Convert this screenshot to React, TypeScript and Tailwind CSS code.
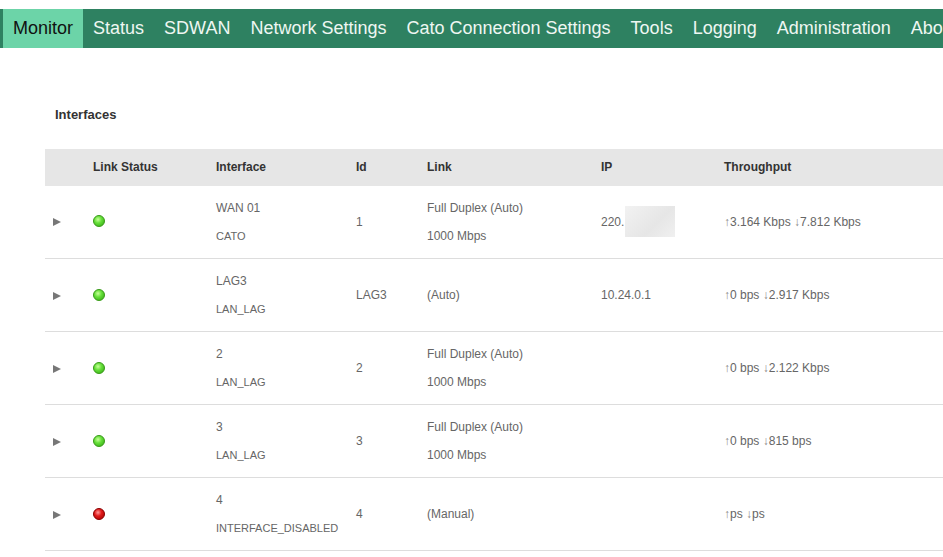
const navItems = [
  'Monitor',
  'Status',
  'SDWAN',
  'Network Settings',
  'Cato Connection Settings',
  'Tools',
  'Logging',
  'Administration',
  'About',
]

type Row = {
  up: boolean
  name: string
  group: string
  id: string
  link: string[]
  ip?: string
  blur?: boolean
  tx: string
  rx: string
}

const rows: Row[] = [
  { up: true, name: 'WAN 01', group: 'CATO', id: '1', link: ['Full Duplex (Auto)', '1000 Mbps'], ip: '220.', blur: true, tx: '3.164 Kbps', rx: '7.812 Kbps' },
  { up: true, name: 'LAG3', group: 'LAN_LAG', id: 'LAG3', link: ['(Auto)'], ip: '10.24.0.1', tx: '0 bps', rx: '2.917 Kbps' },
  { up: true, name: '2', group: 'LAN_LAG', id: '2', link: ['Full Duplex (Auto)', '1000 Mbps'], tx: '0 bps', rx: '2.122 Kbps' },
  { up: true, name: '3', group: 'LAN_LAG', id: '3', link: ['Full Duplex (Auto)', '1000 Mbps'], tx: '0 bps', rx: '815 bps' },
  { up: false, name: '4', group: 'INTERFACE_DISABLED', id: '4', link: ['(Manual)'], tx: 'ps', rx: 'ps' },
]

function Led({ up }: { up: boolean }) {
  return up ? (
    <span className="inline-block h-[12px] w-[12px] rounded-full border border-[#3a9a1a] bg-[radial-gradient(circle_at_40%_35%,#c8ff9a_0%,#66e03a_40%,#2fa40e_100%)]" />
  ) : (
    <span className="inline-block h-[12px] w-[12px] rounded-full border border-[#8a0000] bg-[radial-gradient(circle_at_40%_35%,#ff9a9a_0%,#e01a1a_40%,#a00000_100%)]" />
  )
}

export default function App() {
  return (
    <div className="h-[557px] w-[943px] overflow-hidden bg-white font-['Liberation_Sans',Arial,sans-serif]">
      <nav className="mt-[9px] flex h-[39px] items-stretch overflow-hidden whitespace-nowrap bg-[#2e8161] pl-[3px] text-[18px]">
        {navItems.map((item, i) => (
          <a
            key={item}
            className={
              i === 0
                ? 'flex shrink-0 items-center bg-[#6cd4a8] px-[10px] text-[#111]'
                : 'flex shrink-0 items-center px-[10px] text-[#eef7f2]'
            }
          >
            {item}
          </a>
        ))}
      </nav>

      <h2 className="ml-[55px] mt-[57px] text-[13px] font-bold text-[#333]">Interfaces</h2>

      <table className="ml-[45px] mt-[24px] w-[1000px] table-fixed border-collapse text-[12px]">
        <thead>
          <tr className="h-[37px] bg-[#e6e6e6] text-left font-bold text-[#333]">
            <th className="w-[48px]" />
            <th className="w-[123px] font-bold">Link Status</th>
            <th className="w-[140px] font-bold">Interface</th>
            <th className="w-[71px] font-bold">Id</th>
            <th className="w-[174px] font-bold">Link</th>
            <th className="w-[123px] font-bold">IP</th>
            <th className="font-bold">Throughput</th>
          </tr>
        </thead>
        <tbody className="text-[#666]">
          {rows.map((r) => (
            <tr key={r.name} className="h-[73px] border-b border-[#dddddd]">
              <td className="pl-[8px] pt-[1px]">
                <span className="inline-block h-0 w-0 border-y-[4px] border-l-[8px] border-y-transparent border-l-[#777]" />
              </td>
              <td className="pt-[3px]">
                <Led up={r.up} />
              </td>
              <td className="leading-[28px]">
                <div>{r.name}</div>
                <div className="text-[11px]">{r.group}</div>
              </td>
              <td>{r.id}</td>
              <td className="leading-[28px]">
                {r.link.map((l) => (
                  <div key={l}>{l}</div>
                ))}
              </td>
              <td>
                {r.ip && (
                  <div className="flex items-center">
                    <span>{r.ip}</span>
                    {r.blur && (
                      <span className="ml-[1px] inline-block h-[31px] w-[50px] bg-[linear-gradient(135deg,#f2f2f2,#e6e6e6_60%,#f0f0f0)]" />
                    )}
                  </div>
                )}
              </td>
              <td>
                <span className="text-[#888]">↑</span>
                {r.tx} <span className="text-[#888]">↓</span>
                {r.rx}
              </td>
            </tr>
          ))}
        </tbody>
      </table>
    </div>
  )
}
